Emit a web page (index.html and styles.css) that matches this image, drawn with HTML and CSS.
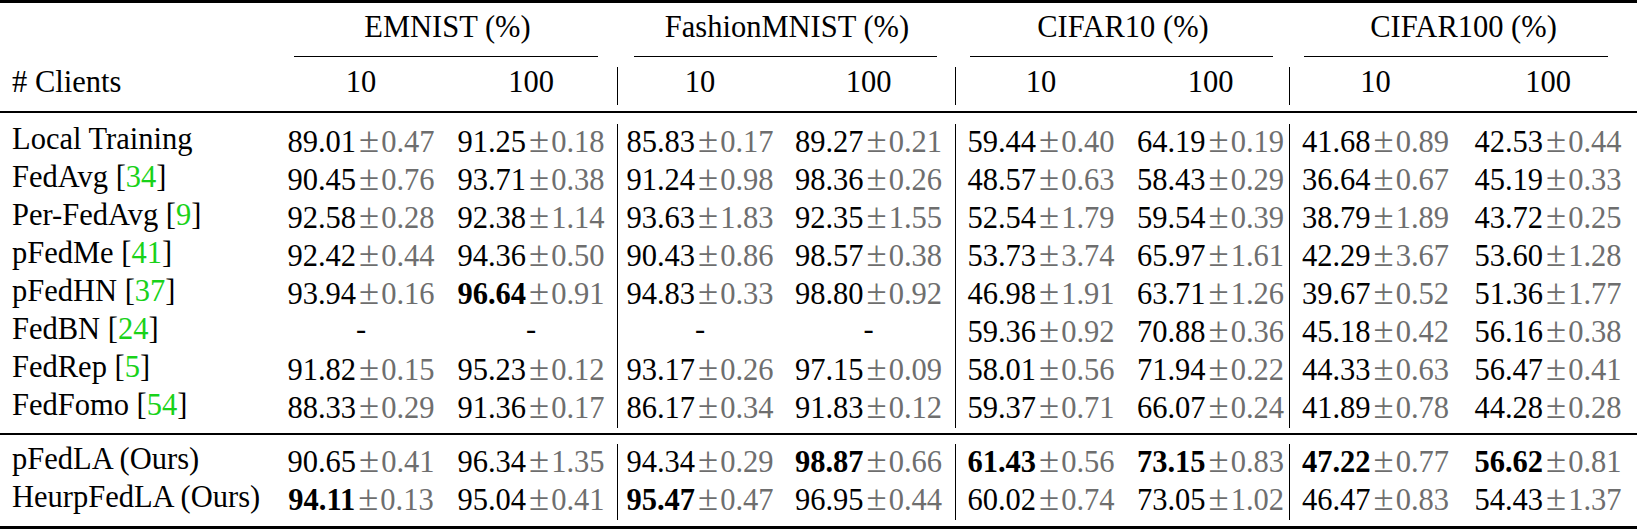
FILE: index.html
```html
<!DOCTYPE html>
<html lang="en">
<head>
<meta charset="utf-8">
<title>Results table</title>
<link rel="stylesheet" href="styles.css">
</head>
<body>
<div class="tbl">
  <div class="rule top"></div>

  <div class="row head1">
    <div class="cell"></div>
    <div class="cell grp">EMNIST (%)</div>
    <div class="cell grp">FashionMNIST (%)</div>
    <div class="cell grp">CIFAR10 (%)</div>
    <div class="cell grp">CIFAR100 (%)</div>
  </div>

  <div class="row cmids">
    <div></div>
    <div class="cmid k1"></div>
    <div class="cmid k2"></div>
    <div class="cmid k3"></div>
    <div class="cmid k4"></div>
  </div>

  <div class="row head2 vl">
    <div class="cell lbl"># Clients</div>
    <div class="cell">10</div><div class="cell">100</div>
    <div class="cell">10</div><div class="cell">100</div>
    <div class="cell">10</div><div class="cell">100</div>
    <div class="cell">10</div><div class="cell">100</div>
  </div>

  <div class="rule mid"></div>

  <div class="body">
    <div class="row vl">
      <div class="cell lbl">Local Training</div>
      <div class="cell">89.01<span class="sd"><span class="pm">±</span>0.47</span></div>
      <div class="cell">91.25<span class="sd"><span class="pm">±</span>0.18</span></div>
      <div class="cell">85.83<span class="sd"><span class="pm">±</span>0.17</span></div>
      <div class="cell">89.27<span class="sd"><span class="pm">±</span>0.21</span></div>
      <div class="cell">59.44<span class="sd"><span class="pm">±</span>0.40</span></div>
      <div class="cell">64.19<span class="sd"><span class="pm">±</span>0.19</span></div>
      <div class="cell">41.68<span class="sd"><span class="pm">±</span>0.89</span></div>
      <div class="cell">42.53<span class="sd"><span class="pm">±</span>0.44</span></div>
    </div>
    <div class="row vl">
      <div class="cell lbl">FedAvg [<span class="cite">34</span>]</div>
      <div class="cell">90.45<span class="sd"><span class="pm">±</span>0.76</span></div>
      <div class="cell">93.71<span class="sd"><span class="pm">±</span>0.38</span></div>
      <div class="cell">91.24<span class="sd"><span class="pm">±</span>0.98</span></div>
      <div class="cell">98.36<span class="sd"><span class="pm">±</span>0.26</span></div>
      <div class="cell">48.57<span class="sd"><span class="pm">±</span>0.63</span></div>
      <div class="cell">58.43<span class="sd"><span class="pm">±</span>0.29</span></div>
      <div class="cell">36.64<span class="sd"><span class="pm">±</span>0.67</span></div>
      <div class="cell">45.19<span class="sd"><span class="pm">±</span>0.33</span></div>
    </div>
    <div class="row vl">
      <div class="cell lbl">Per-FedAvg [<span class="cite">9</span>]</div>
      <div class="cell">92.58<span class="sd"><span class="pm">±</span>0.28</span></div>
      <div class="cell">92.38<span class="sd"><span class="pm">±</span>1.14</span></div>
      <div class="cell">93.63<span class="sd"><span class="pm">±</span>1.83</span></div>
      <div class="cell">92.35<span class="sd"><span class="pm">±</span>1.55</span></div>
      <div class="cell">52.54<span class="sd"><span class="pm">±</span>1.79</span></div>
      <div class="cell">59.54<span class="sd"><span class="pm">±</span>0.39</span></div>
      <div class="cell">38.79<span class="sd"><span class="pm">±</span>1.89</span></div>
      <div class="cell">43.72<span class="sd"><span class="pm">±</span>0.25</span></div>
    </div>
    <div class="row vl">
      <div class="cell lbl">pFedMe [<span class="cite">41</span>]</div>
      <div class="cell">92.42<span class="sd"><span class="pm">±</span>0.44</span></div>
      <div class="cell">94.36<span class="sd"><span class="pm">±</span>0.50</span></div>
      <div class="cell">90.43<span class="sd"><span class="pm">±</span>0.86</span></div>
      <div class="cell">98.57<span class="sd"><span class="pm">±</span>0.38</span></div>
      <div class="cell">53.73<span class="sd"><span class="pm">±</span>3.74</span></div>
      <div class="cell">65.97<span class="sd"><span class="pm">±</span>1.61</span></div>
      <div class="cell">42.29<span class="sd"><span class="pm">±</span>3.67</span></div>
      <div class="cell">53.60<span class="sd"><span class="pm">±</span>1.28</span></div>
    </div>
    <div class="row vl">
      <div class="cell lbl">pFedHN [<span class="cite">37</span>]</div>
      <div class="cell">93.94<span class="sd"><span class="pm">±</span>0.16</span></div>
      <div class="cell"><b>96.64</b><span class="sd"><span class="pm">±</span>0.91</span></div>
      <div class="cell">94.83<span class="sd"><span class="pm">±</span>0.33</span></div>
      <div class="cell">98.80<span class="sd"><span class="pm">±</span>0.92</span></div>
      <div class="cell">46.98<span class="sd"><span class="pm">±</span>1.91</span></div>
      <div class="cell">63.71<span class="sd"><span class="pm">±</span>1.26</span></div>
      <div class="cell">39.67<span class="sd"><span class="pm">±</span>0.52</span></div>
      <div class="cell">51.36<span class="sd"><span class="pm">±</span>1.77</span></div>
    </div>
    <div class="row vl">
      <div class="cell lbl">FedBN [<span class="cite">24</span>]</div>
      <div class="cell">-</div>
      <div class="cell">-</div>
      <div class="cell">-</div>
      <div class="cell">-</div>
      <div class="cell">59.36<span class="sd"><span class="pm">±</span>0.92</span></div>
      <div class="cell">70.88<span class="sd"><span class="pm">±</span>0.36</span></div>
      <div class="cell">45.18<span class="sd"><span class="pm">±</span>0.42</span></div>
      <div class="cell">56.16<span class="sd"><span class="pm">±</span>0.38</span></div>
    </div>
    <div class="row vl">
      <div class="cell lbl">FedRep [<span class="cite">5</span>]</div>
      <div class="cell">91.82<span class="sd"><span class="pm">±</span>0.15</span></div>
      <div class="cell">95.23<span class="sd"><span class="pm">±</span>0.12</span></div>
      <div class="cell">93.17<span class="sd"><span class="pm">±</span>0.26</span></div>
      <div class="cell">97.15<span class="sd"><span class="pm">±</span>0.09</span></div>
      <div class="cell">58.01<span class="sd"><span class="pm">±</span>0.56</span></div>
      <div class="cell">71.94<span class="sd"><span class="pm">±</span>0.22</span></div>
      <div class="cell">44.33<span class="sd"><span class="pm">±</span>0.63</span></div>
      <div class="cell">56.47<span class="sd"><span class="pm">±</span>0.41</span></div>
    </div>
    <div class="row vl">
      <div class="cell lbl">FedFomo [<span class="cite">54</span>]</div>
      <div class="cell">88.33<span class="sd"><span class="pm">±</span>0.29</span></div>
      <div class="cell">91.36<span class="sd"><span class="pm">±</span>0.17</span></div>
      <div class="cell">86.17<span class="sd"><span class="pm">±</span>0.34</span></div>
      <div class="cell">91.83<span class="sd"><span class="pm">±</span>0.12</span></div>
      <div class="cell">59.37<span class="sd"><span class="pm">±</span>0.71</span></div>
      <div class="cell">66.07<span class="sd"><span class="pm">±</span>0.24</span></div>
      <div class="cell">41.89<span class="sd"><span class="pm">±</span>0.78</span></div>
      <div class="cell">44.28<span class="sd"><span class="pm">±</span>0.28</span></div>
    </div>
  </div>

  <div class="rule mid2"></div>

  <div class="body">
    <div class="row vl">
      <div class="cell lbl">pFedLA (Ours)</div>
      <div class="cell">90.65<span class="sd"><span class="pm">±</span>0.41</span></div>
      <div class="cell">96.34<span class="sd"><span class="pm">±</span>1.35</span></div>
      <div class="cell">94.34<span class="sd"><span class="pm">±</span>0.29</span></div>
      <div class="cell"><b>98.87</b><span class="sd"><span class="pm">±</span>0.66</span></div>
      <div class="cell"><b>61.43</b><span class="sd"><span class="pm">±</span>0.56</span></div>
      <div class="cell"><b>73.15</b><span class="sd"><span class="pm">±</span>0.83</span></div>
      <div class="cell"><b>47.22</b><span class="sd"><span class="pm">±</span>0.77</span></div>
      <div class="cell"><b>56.62</b><span class="sd"><span class="pm">±</span>0.81</span></div>
    </div>
    <div class="row vl">
      <div class="cell lbl">HeurpFedLA (Ours)</div>
      <div class="cell"><b>94.11</b><span class="sd"><span class="pm">±</span>0.13</span></div>
      <div class="cell">95.04<span class="sd"><span class="pm">±</span>0.41</span></div>
      <div class="cell"><b>95.47</b><span class="sd"><span class="pm">±</span>0.47</span></div>
      <div class="cell">96.95<span class="sd"><span class="pm">±</span>0.44</span></div>
      <div class="cell">60.02<span class="sd"><span class="pm">±</span>0.74</span></div>
      <div class="cell">73.05<span class="sd"><span class="pm">±</span>1.02</span></div>
      <div class="cell">46.47<span class="sd"><span class="pm">±</span>0.83</span></div>
      <div class="cell">54.43<span class="sd"><span class="pm">±</span>1.37</span></div>
    </div>
  </div>

  <div class="rule bottom"></div>
</div>
</body>
</html>
```

FILE: styles.css
```css
html, body {
  margin: 0;
  padding: 0;
  background: #ffffff;
}

body {
  width: 1637px;
  height: 530px;
  overflow: hidden;
  font-family: "Liberation Serif", "Times New Roman", serif;
  font-size: 30.5px;
  color: #000000;
}

.tbl {
  display: flex;
  flex-direction: column;
}

.rule {
  background: #000000;
  width: 100%;
}

.rule.top {
  height: 3px;
  margin-bottom: 9px;
}

.rule.mid {
  height: 1.6px;
  margin-top: 6px;
  margin-bottom: 11.4px;
}

.rule.mid2 {
  height: 1.6px;
  margin-top: 5px;
  margin-bottom: 9.4px;
}

.rule.bottom {
  height: 2.5px;
  margin-top: 6.5px;
}

.row {
  display: grid;
  grid-template-columns: 277px 168px 173px 164px 174px 170px 164px 171px 176px;
}

.cell {
  height: 38px;
  line-height: 31px;
  text-align: center;
  white-space: nowrap;
}

.cell.lbl {
  text-align: left;
  padding-left: 12px;
}

/* group headers */
.head1 .grp {
  grid-column: span 2;
}

/* cmidrules */
.cmids {
  margin-top: 6px;
  height: 1px;
}

.cmid {
  grid-column: span 2;
  height: 1px;
  background: #000000;
}

.cmid.k1 { margin: 0 20px 0 17px; }
.cmid.k2 { margin: 0 19px 0 16px; }
.cmid.k3 { margin: 0 17px 0 14px; }
.cmid.k4 { margin: 0 29px 0 14px; }

.head2 {
  margin-top: 10px;
}

/* vertical rules and column centring */
.vl > .cell:nth-child(3) {
  border-right: 1px solid #000000;
}

.vl > .cell:nth-child(5) {
  border-right: 1px solid #000000;
}

.vl > .cell:nth-child(7) {
  border-right: 1px solid #000000;
  padding-left: 6px;
}

.vl > .cell:nth-child(9) {
  padding-right: 2px;
}

.sd {
  color: #6e6e6e;
}

.pm {
  font-size: 1.2em;
  margin: 0 2px 0 3px;
}

.cite {
  color: #19d219;
}

b {
  font-weight: bold;
}
```
